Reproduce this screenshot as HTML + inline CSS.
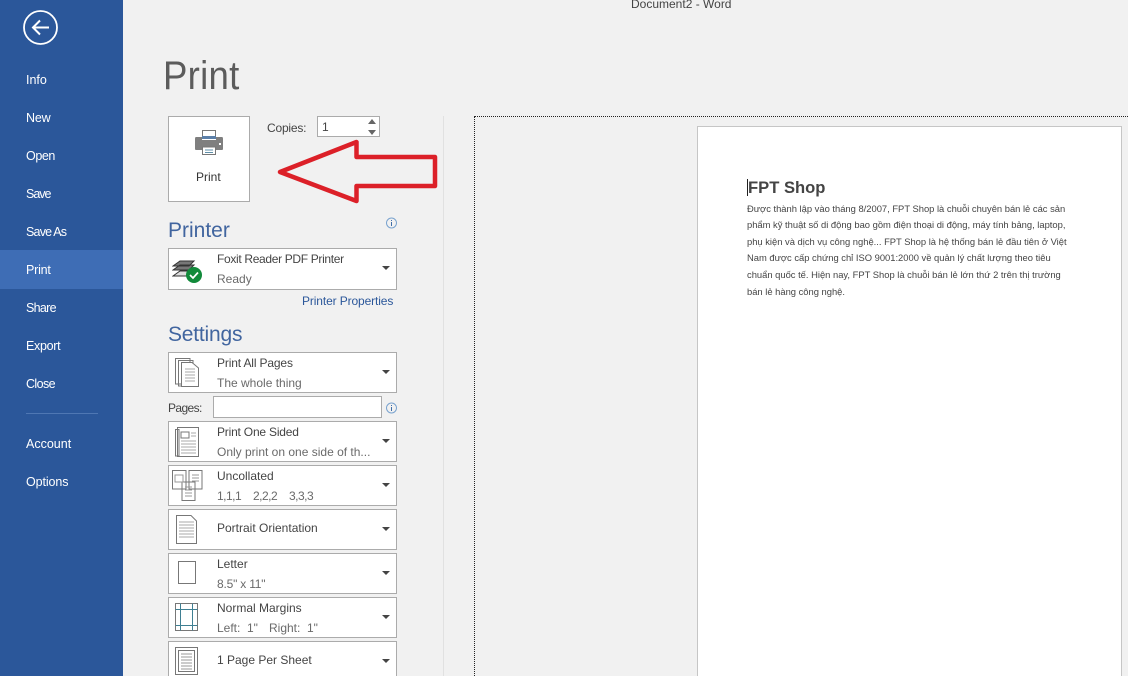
<!DOCTYPE html>
<html><head><meta charset="utf-8">
<style>
*{box-sizing:border-box;margin:0;padding:0}
html,body{width:1128px;height:676px;overflow:hidden;background:#f1f1f1;font-family:"Liberation Sans",sans-serif}
#w{position:relative;width:1128px;height:676px;overflow:hidden;background:#f1f1f1}
.a{position:absolute;white-space:nowrap}
.nav{position:absolute;left:0;width:123px;height:38px;line-height:38px;padding-left:26px;color:#fff;font-size:12.5px}
.box{position:absolute;left:168px;width:229px;background:#fff;border:1px solid #ababab}
.t{position:absolute;left:48px;font-size:12px;color:#444;white-space:nowrap}
.s{color:#6a6a6a}
.caret{position:absolute;right:6px;width:0;height:0;border-left:4px solid transparent;border-right:4px solid transparent;border-top:4px solid #444}
.ic{position:absolute;left:0;top:0}
.d{position:absolute;left:747px;font-size:9.4px;color:#444;white-space:nowrap;font-family:"Liberation Sans",sans-serif}
</style></head><body><div id="w">
<div class="a" style="left:0;top:0;width:123px;height:676px;background:#2b579a"></div>
<svg class="a" style="left:22px;top:9px" width="38" height="38" viewBox="0 0 38 38" fill="none" stroke="#fff"><circle cx="18.5" cy="18.5" r="16.5" stroke-width="1.8"/><path d="M11 18.5H27M18 11.5L11 18.5L18 25.5" stroke-width="2"/></svg>
<div class="nav" style="top:61px">Info</div>
<div class="nav" style="top:99px;letter-spacing:-.2px">New</div>
<div class="nav" style="top:137px;letter-spacing:-.4px">Open</div>
<div class="nav" style="top:175px;letter-spacing:-1px">Save</div>
<div class="nav" style="top:213px;letter-spacing:-.8px">Save As</div>
<div class="a" style="left:0;top:250px;width:123px;height:39px;background:#3e6db5"></div>
<div class="nav" style="top:251px;letter-spacing:-.2px">Print</div>
<div class="nav" style="top:289px;letter-spacing:-.7px">Share</div>
<div class="nav" style="top:327px;letter-spacing:-.3px">Export</div>
<div class="nav" style="top:365px;letter-spacing:-.6px">Close</div>
<div class="a" style="left:26px;top:413px;width:72px;height:1px;background:#4f77b3"></div>
<div class="nav" style="top:425px">Account</div>
<div class="nav" style="top:463px;letter-spacing:-.1px">Options</div>

<div class="a" style="left:631px;top:-3px;font-size:12px;color:#444">Document2 - Word</div>
<div class="a" style="left:163px;top:53px;font-size:40px;line-height:46px;color:#5c5c5c;transform:scaleX(.915);transform-origin:left top;letter-spacing:.3px">Print</div>

<div class="a" style="left:168px;top:116px;width:82px;height:86px;background:#fff;border:1px solid #ababab"></div>
<svg class="a" style="left:194px;top:129px" width="30" height="28" viewBox="0 0 30 28"><path d="M8.5 1.5H21.5V9H8.5z" fill="#fff" stroke="#777"/><path d="M8 7H22V10H8z" fill="#5b7fa8"/><path d="M2 8H8V11H22V8H28Q29 8 29 10V20Q29 21 28 21H2Q1 21 1 20V10Q1 8 2 8z" fill="#7f7f7f"/><path d="M8.5 18H21.5V25.5H8.5z" fill="#fff" stroke="#777"/><path d="M11 21H19M11 23.5H19" stroke="#5f8fa8"/><rect x="25" y="14" width="2" height="2" fill="#fff"/></svg>
<div class="a" style="left:196px;top:170px;font-size:12px;color:#333">Print</div>
<div class="a" style="left:267px;top:121px;font-size:12px;color:#444;letter-spacing:-.2px">Copies:</div>
<div class="a" style="left:317px;top:116px;width:63px;height:21px;background:#fff;border:1px solid #ababab"></div>
<div class="a" style="left:322px;top:120px;font-size:12px;color:#444">1</div>
<div class="a" style="left:368px;top:119px;border-left:4px solid transparent;border-right:4px solid transparent;border-bottom:5px solid #666"></div>
<div class="a" style="left:368px;top:130px;border-left:4px solid transparent;border-right:4px solid transparent;border-top:5px solid #666"></div>
<div class="a" style="left:443px;top:116px;width:1px;height:560px;background:#e1e1e1"></div>

<svg class="a" style="left:270px;top:135px" width="172" height="72" viewBox="0 0 172 72"><path d="M10 37L86.500 7V22H165V51H86.500V66Z" fill="none" stroke="#dc2028" stroke-width="4.5" stroke-linejoin="round"/></svg>

<div class="a" style="left:168px;top:217px;font-size:21px;line-height:28px;color:#41659f">Printer</div>
<svg class="a" style="left:385px;top:216px" width="14" height="14" viewBox="0 0 14 14"><circle cx="6.500" cy="7" r="5" fill="none" stroke="#7aa3cf"/><path d="M6.500 6V10M6.500 4V5" stroke="#3f6ea8"/></svg>
<div class="box" style="top:248px;height:42px">
<svg class="ic" style="left:3px;top:9px" width="32" height="26" viewBox="0 0 32 26"><path d="M1 8L8 3H22L17 8ZM1 12L8 7H22L17 12Z" fill="#777" stroke="#333"/><path d="M1 18L8 13H20L15 18Z" fill="#ddd" stroke="#333"/><circle cx="22" cy="17" r="8" fill="#118a3a"/><path d="M18 17L21 20L26 14.500" stroke="#fff" stroke-width="1.7" fill="none"/></svg>
<div class="t" style="top:3px;letter-spacing:-.33px">Foxit Reader PDF Printer</div><div class="t s" style="top:23px">Ready</div><div class="caret" style="top:17px"></div></div>
<div class="a" style="left:302px;top:294px;font-size:12px;color:#2b579a;letter-spacing:-.12px">Printer Properties</div>

<div class="a" style="left:168px;top:321px;font-size:21px;line-height:28px;color:#41659f;letter-spacing:-.2px">Settings</div>
<div class="box" style="top:352px;height:41px">
<svg class="ic" style="left:6px;top:5px" width="26" height="30" viewBox="0 0 26 30" fill="#fff" stroke="#777"><path d="M.5 .5H15V26H.5zM3.500 2.500H18V28H3.500z"/><path d="M6.500 4.500H17L23.500 10V28.500H6.500z"/><path d="M10 11H20M10 14H20M10 17H20M10 20H20M10 23H20" stroke="#aaa"/></svg>
<div class="t" style="top:3px;letter-spacing:-.15px">Print All Pages</div><div class="t s" style="top:23px">The whole thing</div><div class="caret" style="top:17px"></div></div>
<div class="a" style="left:168px;top:401px;font-size:12px;color:#444;letter-spacing:-.6px">Pages:</div>
<div class="a" style="left:213px;top:396px;width:169px;height:22px;background:#fff;border:1px solid #ababab"></div>
<svg class="a" style="left:385px;top:401px" width="14" height="14" viewBox="0 0 14 14"><circle cx="6.500" cy="7" r="5" fill="none" stroke="#7aa3cf"/><path d="M6.500 6V10M6.500 4V5" stroke="#3f6ea8"/></svg>
<div class="box" style="top:421px;height:41px">
<svg class="ic" style="left:6px;top:4px" width="26" height="32" viewBox="0 0 26 32" fill="#fff" stroke="#777"><path d="M.5 3.500H4V30H.5zM2.500 1.500H23.500V30.500H2.500z"/><path d="M6 6H14V12H6z"/><path d="M16 7H21M16 10H21M6 15H21M6 18H21M6 21H21M6 24H21M6 27H21" stroke="#aaa"/></svg>
<div class="t" style="top:3px;letter-spacing:-.2px">Print One Sided</div><div class="t s" style="top:23px">Only print on one side of th...</div><div class="caret" style="top:17px"></div></div>
<div class="box" style="top:465px;height:41px">
<svg class="ic" style="left:3px;top:4px" width="32" height="32" viewBox="0 0 32 32" fill="#fff" stroke="#777"><path d="M.5 .5H14V19H.5zM17 .5H30V19H17zM10 12H23V30.500H10z"/><path d="M3 5H11V12H3zM20 5H27M20 8H27M20 11H27M13 17H20M13 20H20M13 23H20M13 26H20" stroke="#999"/></svg>
<div class="t" style="top:3px">Uncollated</div>
<div class="t s" style="top:23px;letter-spacing:-.5px">1,1,1</div><div class="t s" style="top:23px;left:84px;letter-spacing:-.5px">2,2,2</div><div class="t s" style="top:23px;left:120px;letter-spacing:-.5px">3,3,3</div>
<div class="caret" style="top:17px"></div></div>
<div class="box" style="top:509px;height:41px">
<svg class="ic" style="left:7px;top:5px" width="24" height="30" viewBox="0 0 24 30" fill="#fff" stroke="#777"><path d="M.5 .5H15L20.500 6V28.500H.5z"/><path d="M3 7H18M3 10H18M3 13H18M3 16H18M3 19H18M3 22H18" stroke="#aaa"/></svg>
<div class="t" style="top:11px">Portrait Orientation</div><div class="caret" style="top:17px"></div></div>
<div class="box" style="top:553px;height:41px">
<svg class="ic" style="left:9px;top:7px" width="20" height="26" viewBox="0 0 20 26" fill="#fff" stroke="#777"><path d="M.5 .5H17.500V22.500H.5z"/></svg>
<div class="t" style="top:3px">Letter</div><div class="t s" style="top:23px;letter-spacing:-.2px">8.5" x 11"</div><div class="caret" style="top:17px"></div></div>
<div class="box" style="top:597px;height:41px">
<svg class="ic" style="left:6px;top:5px" width="25" height="30" viewBox="0 0 25 30" fill="#fff" stroke="#777"><path d="M.5 .5H22.500V27.500H.5z"/><path d="M5.500 .5V27.500M17.500 .5V27.500M.5 6.500H22.500M.5 22.500H22.500" stroke="#3f7f92"/></svg>
<div class="t" style="top:3px">Normal Margins</div>
<div class="t s" style="top:23px">Left:</div><div class="t s" style="top:23px;left:78px">1"</div><div class="t s" style="top:23px;left:100px">Right:</div><div class="t s" style="top:23px;left:138px">1"</div>
<div class="caret" style="top:17px"></div></div>
<div class="box" style="top:641px;height:45px">
<svg class="ic" style="left:6px;top:5px" width="25" height="30" viewBox="0 0 25 30" fill="#fff" stroke="#777"><path d="M.5 .5H22.500V27.500H.5zM3.500 3.500H19.500V24.500H3.500z"/><path d="M6 7H17M6 10H17M6 13H17M6 16H17M6 19H17M6 22H17" stroke="#999"/></svg>
<div class="t" style="top:11px">1 Page Per Sheet</div><div class="caret" style="top:17px"></div></div>

<div class="a" style="left:474px;top:116px;width:660px;height:570px;border-top:1px dotted #222;border-left:1px dotted #222"></div>
<div class="a" style="left:697px;top:126px;width:425px;height:560px;background:#fff;border:1px solid #c6c6c6"></div>
<div class="a" style="left:747px;top:179px;width:1px;height:17px;background:#222"></div>
<div class="a" style="left:748px;top:179px;font-size:16.600px;font-weight:bold;color:#444;line-height:18px">FPT Shop</div>
<div class="d" style="top:203px">Được thành lập vào tháng 8/2007, FPT Shop là chuỗi chuyên bán lẻ các sản</div>
<div class="d" style="top:219px">phẩm kỹ thuật số di động bao gồm điện thoại di động, máy tính bảng, laptop,</div>
<div class="d" style="top:236px">phụ kiện và dịch vụ công nghệ... FPT Shop là hệ thống bán lẻ đầu tiên ở Việt</div>
<div class="d" style="top:252px">Nam được cấp chứng chỉ ISO 9001:2000 về quản lý chất lượng theo tiêu</div>
<div class="d" style="top:269px">chuẩn quốc tế. Hiện nay, FPT Shop là chuỗi bán lẻ lớn thứ 2 trên thị trường</div>
<div class="d" style="top:286px">bán lẻ hàng công nghệ.</div>
</div></body></html>
